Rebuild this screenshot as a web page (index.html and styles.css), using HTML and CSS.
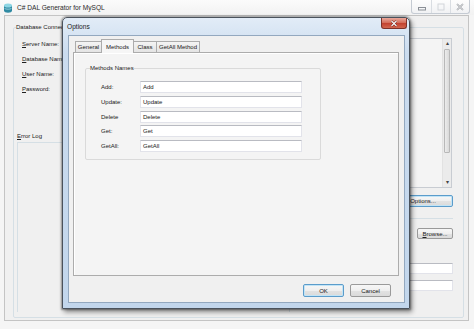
FILE: index.html
```html
<!DOCTYPE html>
<html lang="en">
<head>
    <meta charset="UTF-8">
    <meta name="viewport" content="width=device-width, initial-scale=1.0">
    <title>C# DAL Generator for MySQL</title>
    <link rel="stylesheet" href="styles.css">
</head>
<body>
    <div class="app">
        <div class="app-titlebar">
            <svg class="app-icon" viewBox="0 0 12 12">
                <path d="M2 3.5v5c0 1.3 1.8 2.3 4 2.3s4-1 4-2.3v-5z" fill="#2f8aa3"/>
                <ellipse cx="6" cy="3.5" rx="4" ry="2" fill="#8fd6e4"/>
                <path d="M2.6 6.5c1 .9 5.8.9 6.8 0" stroke="#bfe8f0" stroke-width=".7" fill="none"/>
            </svg>
            <span class="app-title">C# DAL Generator for MySQL</span>
            <div class="caption-buttons">
                <span class="cap-btn">
                    <svg width="8" height="8" viewBox="0 0 8 8"><rect x="0.5" y="4.5" width="7" height="2.5" fill="none" stroke="#8a8f96"/></svg>
                </span>
                <span class="cap-btn">
                    <svg width="8" height="8" viewBox="0 0 8 8"><rect x="1" y="1" width="6" height="6" fill="none" stroke="#d2d5da"/></svg>
                </span>
                <span class="cap-btn">
                    <svg width="8" height="8" viewBox="0 0 8 8"><path d="M1 1l6 6M7 1l-6 6" stroke="#9a9ea4" stroke-width="1.6"/><path d="M1 1l6 6M7 1l-6 6" stroke="#f4f4f4" stroke-width=".5"/></svg>
                </span>
            </div>
        </div>

        <div class="app-client">
            <fieldset class="conn">
                <legend>Database Connection</legend>
                <div class="conn-grid">
                    <div class="conn-left">
                        <div class="field-label"><u>S</u>erver Name:</div>
                        <div class="field-label"><u>D</u>atabase Name:</div>
                        <div class="field-label"><u>U</u>ser Name:</div>
                        <div class="field-label"><u>P</u>assword:</div>
                        <div class="log-label"><u>E</u>rror Log</div>
                        <div class="log-box"></div>
                    </div>
                    <div class="conn-right">
                        <div class="listbox">
                            <div class="list-area"></div>
                            <div class="scrollbar">
                                <div class="arrow">&#9652;</div>
                                <div class="track"><div class="thumb"></div></div>
                                <div class="arrow">&#9662;</div>
                            </div>
                        </div>
                        <button class="btn btn-focus btn-options">Options...</button>
                        <div class="divider"></div>
                        <button class="btn btn-browse"><u>B</u>rowse...</button>
                        <div class="textbox wide"></div>
                        <div class="textbox wide second"></div>
                    </div>
                </div>
            </fieldset>
        </div>
    </div>

    <div class="dialog">
        <div class="dialog-titlebar">
            <span class="dialog-title">Options</span>
            <span class="close-btn">
                <svg width="8" height="7" viewBox="0 0 8 7"><path d="M1.5 1l5 5M6.5 1l-5 5" stroke="#5a1a12" stroke-width="2"/><path d="M1.5 1l5 5M6.5 1l-5 5" stroke="#fff" stroke-width="1.1"/></svg>
            </span>
        </div>
        <div class="dialog-client">
            <div class="tab-strip">
                <span class="tab tab-general">General</span>
                <span class="tab tab-methods active">Methods</span>
                <span class="tab tab-class">Class</span>
                <span class="tab tab-getall">GetAll Method</span>
            </div>
            <div class="tab-page">
                <fieldset class="methods">
                    <legend>Methods Names</legend>
                    <div class="method-rows">
                        <label>Add:</label><div class="textbox">Add</div>
                        <label>Update:</label><div class="textbox">Update</div>
                        <label>Delete</label><div class="textbox">Delete</div>
                        <label>Get:</label><div class="textbox">Get</div>
                        <label>GetAll:</label><div class="textbox">GetAll</div>
                    </div>
                </fieldset>
            </div>
            <div class="dialog-buttons">
                <button class="btn btn-default">OK</button>
                <button class="btn">Cancel</button>
            </div>
        </div>
    </div>
</body>
</html>
```

FILE: styles.css
```css
* {
    box-sizing: border-box;
}
body {
    margin: 0;
    width: 474px;
    height: 329px;
    overflow: hidden;
    position: relative;
    background: #f5f5f5;
    font-family: "Liberation Sans", Arial, sans-serif;
    font-size: 6px;
    color: #202020;
}
u {
    text-decoration: underline;
}

/* main window */
.app-titlebar {
    height: 15px;
    display: flex;
    align-items: center;
    background: linear-gradient(#fbfbfb, #f2f2f2);
}
.app-icon {
    width: 12px;
    height: 12px;
    margin-left: 2px;
    margin-right: 3px;
}
.app-title {
    font-size: 6.6px;
    color: #2a2a2a;
}
.caption-buttons {
    margin-left: auto;
    margin-right: 4px;
    align-self: flex-start;
    display: flex;
    height: 14px;
    border: 1px solid #c5cbd3;
    border-top: none;
    border-radius: 0 0 3px 3px;
    background: linear-gradient(#fdfdfd, #f1f2f4);
}
.cap-btn {
    width: 19px;
    display: flex;
    align-items: center;
    justify-content: center;
    border-left: 1px solid #d9dde2;
}
.cap-btn:first-child {
    border-left: none;
}
.app-client {
    margin-left: 4px;
    width: 465px;
    height: 306px;
    border: 1px solid #c4c4c4;
    background: #f0f0f0;
    padding: 7px 4px 2px 8px;
}
.conn {
    margin: 0;
    height: 100%;
    min-width: 0;
    border: 1px solid #d5dfe5;
    border-radius: 2px;
    padding: 0 10px 5px 0;
}
.conn legend,
.methods legend {
    padding: 0;
    margin-left: 2px;
    line-height: 8px;
}
.conn-grid {
    display: grid;
    grid-template-columns: 1fr 153px;
    height: 100%;
}
.conn-left {
    display: flex;
    flex-direction: column;
}
.field-label {
    margin-left: 8px;
    line-height: 15px;
}
.field-label:first-child {
    margin-top: 5.5px;
}
.log-label {
    margin-left: 3px;
    margin-top: 35.5px;
    line-height: 8px;
}
.log-box {
    margin: 2px 10px 0 3px;
    flex: 1;
    border: 1px solid #d5dfe5;
    border-bottom: none;
}
.conn-right {
    display: flex;
    flex-direction: column;
    align-items: flex-end;
}
.listbox {
    margin-top: 7px;
    margin-right: 1px;
    width: 140px;
    height: 150px;
    display: flex;
    border: 1px solid #c8ccd2;
    background: #f4f4f4;
}
.list-area {
    flex: 1;
}
.scrollbar {
    width: 9px;
    display: flex;
    flex-direction: column;
    border-left: 1px solid #e2e2e2;
    background: #ebebeb;
}
.arrow {
    height: 9px;
    font-size: 6px;
    line-height: 9px;
    text-align: center;
    color: #444;
}
.track {
    flex: 1;
}
.thumb {
    height: 104px;
    margin: 1px 1px 0;
    border: 1px solid #b8b8b8;
    border-radius: 1px;
    background: linear-gradient(to right, #ececec, #d9d9d9);
}
.divider {
    margin-top: 11px;
    width: 100%;
    border-top: 1px solid #d5dfe5;
}
.textbox {
    height: 12px;
    display: flex;
    align-items: center;
    padding-left: 2px;
    background: #fff;
    border: 1px solid #e2e3ea;
    border-top-color: #b9bbc2;
}
.textbox.wide {
    margin-top: 24px;
    width: 140px;
    height: 11px;
}
.textbox.wide.second {
    margin-top: 6px;
}

/* buttons */
.btn {
    width: 41px;
    height: 13px;
    padding: 0;
    font-family: inherit;
    font-size: 6px;
    color: #202020;
    border: 1px solid #9a9a9a;
    border-radius: 2px;
    background: linear-gradient(#f7f7f7 0%, #efefef 50%, #e3e3e3 50%, #dadada 100%);
}
.btn-default,
.btn-focus {
    border-color: #5b9ccb;
    box-shadow: inset 0 0 0 1px #c2e4f6;
}
.btn-options {
    margin-top: 7px;
    width: 60px;
    height: 12px;
}
.btn-browse {
    margin-top: 9px;
    width: 36px;
    height: 11px;
}

/* options dialog */
.dialog {
    position: absolute;
    left: 62px;
    top: 17px;
    width: 348px;
    height: 292px;
    display: flex;
    flex-direction: column;
    padding: 0 4px 5px 5px;
    border: 1px solid #4a525c;
    border-radius: 5px 5px 0 0;
    background: linear-gradient(#e2ecf7, #cbdcef 12%, #c2d6ec);
    box-shadow: 0 0 2px 1px rgba(0, 0, 0, .35), 2px 3px 5px rgba(0, 0, 0, .45);
}
.dialog-titlebar {
    height: 17px;
    display: flex;
    align-items: center;
}
.dialog-title {
    margin-left: -1px;
    font-size: 6.6px;
    color: #1a1a1a;
}
.close-btn {
    margin-left: auto;
    margin-right: -2px;
    align-self: flex-start;
    width: 26px;
    height: 11px;
    display: flex;
    align-items: center;
    justify-content: center;
    border: 1px solid #7e3229;
    border-top: none;
    border-radius: 0 0 3px 3px;
    background: linear-gradient(#e9a99c, #d5705d 45%, #c34431 55%, #d2664e);
}
.dialog-client {
    flex: 1;
    background: #f0f0f0;
    border: 1px solid #93a8bf;
    padding: 3px 0 0 4px;
}
.tab-strip {
    height: 13px;
    display: flex;
    align-items: flex-end;
    padding-left: 2px;
    position: relative;
    z-index: 1;
}
.tab {
    height: 11px;
    display: flex;
    align-items: center;
    justify-content: center;
    border: 1px solid #acacac;
    border-bottom: none;
    border-right: none;
    background: linear-gradient(#f4f4f4, #e4e4e4);
}
.tab-general { width: 26px; }
.tab-methods { width: 33px; }
.tab-class { width: 22px; }
.tab-getall {
    width: 44px;
    border-right: 1px solid #acacac;
}
.tab.active {
    height: 14px;
    margin-bottom: -1px;
    border-right: 1px solid #acacac;
    background: #f6f6f6;
}
.tab.active + .tab {
    border-left: none;
}
.tab-page {
    width: 326px;
    height: 224px;
    border: 1px solid #acacac;
    background: #f4f4f4;
    box-shadow: inset 1px 1px 0 #fff;
    padding: 11px 0 0 11px;
}
.methods {
    margin: 0;
    width: 236px;
    min-width: 0;
    border: 1px solid #dadada;
    border-radius: 2px;
    padding: 0 0 7px 4px;
}
.methods legend {
    margin-left: 0;
}
.method-rows {
    margin: 9px 0 0 11px;
    display: grid;
    grid-template-columns: 39px 162px;
    grid-auto-rows: 12px;
    row-gap: 2.75px;
    align-items: center;
}
.dialog-buttons {
    margin-top: 8px;
    padding-right: 13px;
    display: flex;
    justify-content: flex-end;
    gap: 6px;
}
```
